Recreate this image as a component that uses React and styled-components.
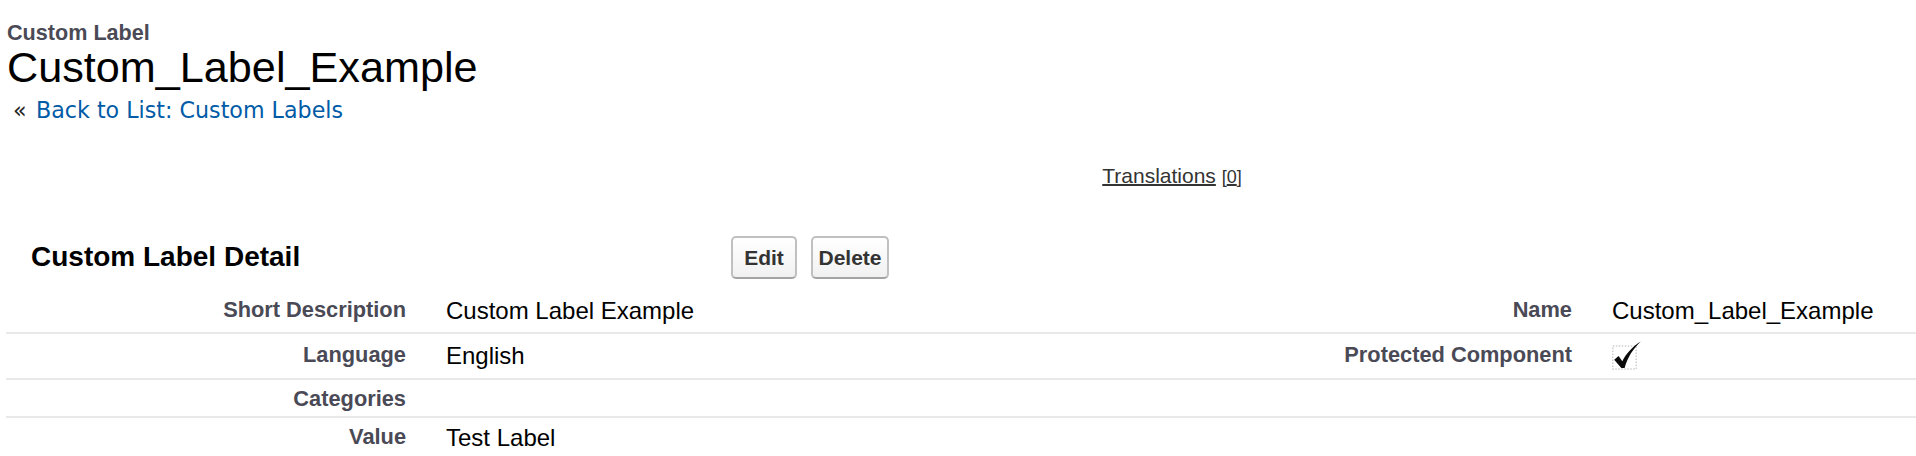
import React from "react";
import styled, { createGlobalStyle } from "styled-components";

const GlobalStyle = createGlobalStyle`
  html, body {
    margin: 0;
    padding: 0;
    overflow: hidden;
    background: #fff;
  }
  body {
    font-family: "Liberation Sans", Arial, Helvetica, sans-serif;
    color: #000;
  }
`;

const Page = styled.div`
  width: 2332px;
  margin-left: 6px;
  padding-top: 21px;
`;

const PageType = styled.div`
  height: 24px;
  padding-left: 1px;
  font-size: 21.6px;
  line-height: 24px;
  font-weight: bold;
  color: #4a4a56;
`;

const Title = styled.h1`
  height: 44px;
  margin: 0 0 0 1px;
  font-size: 43.2px;
  line-height: 44px;
  font-weight: normal;
  color: #000;
`;

const Breadcrumb = styled.div`
  display: flex;
  align-items: baseline;
  height: 26px;
  margin-top: 8px;
  padding-left: 7px;
  font-family: "DejaVu Sans", Verdana, sans-serif;
  font-size: 22.2px;
  line-height: 26px;
`;

const Raquo = styled.span`
  width: 23px;
  flex: none;
  color: #222;
`;

const BackLink = styled.a`
  color: #015ba7;
  text-decoration: none;
  cursor: pointer;
`;

const LinkBar = styled.div`
  height: 24px;
  margin-top: 41px;
  text-align: center;
  font-size: 21px;
  line-height: 24px;
  color: #333;
`;

const TransLink = styled.a`
  color: #333;
  text-decoration: underline;
  text-decoration-thickness: 2px;
  cursor: pointer;
`;

const Count = styled.span`
  font-size: 18px;
  line-height: 1;
  color: #333;
`;

const CountLink = styled.a`
  color: #333;
  text-decoration: underline;
  text-decoration-thickness: 1.5px;
`;

const PbHeader = styled.div`
  display: flex;
  align-items: flex-start;
  height: 43px;
  margin-top: 48px;
  padding-left: 25px;
`;

const PbTitle = styled.h2`
  flex: none;
  width: 700px;
  margin: 5px 0 0;
  font-size: 28px;
  line-height: 32px;
  font-weight: bold;
  color: #000;
`;

const ButtonGroup = styled.div`
  display: flex;
  gap: 14px;
`;

const Button = styled.button`
  box-sizing: border-box;
  width: ${(p) => p.$w}px;
  height: 43px;
  padding: 0;
  border: 2px solid #c0c0c0;
  border-bottom-color: #a3a3a3;
  border-radius: 5px;
  background: linear-gradient(#ffffff, #f1f1f1);
  font-family: "Liberation Sans", Arial, Helvetica, sans-serif;
  font-size: 21px;
  font-weight: bold;
  color: #333;
  cursor: pointer;
`;

const DetailList = styled.div`
  margin-top: 10px;
`;

const Row = styled.div`
  display: grid;
  grid-template-columns: 420px 746px 420px 746px;
  border-bottom: ${(p) => (p.$last ? "none" : "2px solid #e9e9e9")};
`;

const LabelCell = styled.div`
  padding: ${(p) => p.$pt}px 20px ${(p) => p.$pb}px 0;
  text-align: right;
  font-size: 21.8px;
  line-height: 25px;
  font-weight: bold;
  color: #4a4a56;
`;

const DataCell = styled.div`
  padding: ${(p) => p.$pt}px 0 ${(p) => p.$pb}px 20px;
  font-size: 24px;
  line-height: 28px;
  color: #000;
`;

const CheckSvg = styled.svg`
  display: block;
  margin-top: -1px;
`;

const CheckedBox = () => (
  <CheckSvg width="30" height="29" viewBox="0 0 30 29">
    <rect
      x="0.75"
      y="5"
      width="23.5"
      height="23"
      fill="none"
      stroke="#cdcdcd"
      strokeWidth="1.5"
      strokeDasharray="1.5 1.5"
    />
    <path
      d="M2.2 18.8 L6.6 15 L10.3 20.2 C14 13 20 6 28.8 0.6 C21.2 8 15.6 16 12.6 27 L9.3 27 Z"
      fill="#0a0a0a"
    />
  </CheckSvg>
);

const rows = [
  {
    label: "Short Description",
    value: "Custom Label Example",
    label2: "Name",
    value2: "Custom_Label_Example",
    pt: 8,
    pb: 7,
  },
  {
    label: "Language",
    value: "English",
    label2: "Protected Component",
    value2: <CheckedBox />,
    pt: 8,
    pb: 8,
  },
  { label: "Categories", value: "", label2: "", value2: "", pt: 6, pb: 5 },
  { label: "Value", value: "Test Label", label2: "", value2: "", pt: 6, pb: 5 },
];

export default function App() {
  return (
    <>
      <GlobalStyle />
      <Page>
        <PageType>Custom Label</PageType>
        <Title>Custom_Label_Example</Title>
        <Breadcrumb>
          <Raquo>«</Raquo>
          <BackLink>Back to List: Custom Labels</BackLink>
        </Breadcrumb>
        <LinkBar>
          <TransLink>Translations</TransLink>{" "}
          <Count>
            [<CountLink>0</CountLink>]
          </Count>
        </LinkBar>
        <PbHeader>
          <PbTitle>Custom Label Detail</PbTitle>
          <ButtonGroup>
            <Button $w={66}>Edit</Button>
            <Button $w={78}>Delete</Button>
          </ButtonGroup>
        </PbHeader>
        <DetailList>
          {rows.map((r, i) => (
            <Row key={r.label} $last={i === rows.length - 1}>
              <LabelCell $pt={r.pt} $pb={r.pb}>{r.label}</LabelCell>
              <DataCell $pt={r.pt} $pb={r.pb}>{r.value}</DataCell>
              <LabelCell $pt={r.pt} $pb={r.pb}>{r.label2}</LabelCell>
              <DataCell $pt={r.pt} $pb={r.pb}>{r.value2}</DataCell>
            </Row>
          ))}
        </DetailList>
      </Page>
    </>
  );
}
